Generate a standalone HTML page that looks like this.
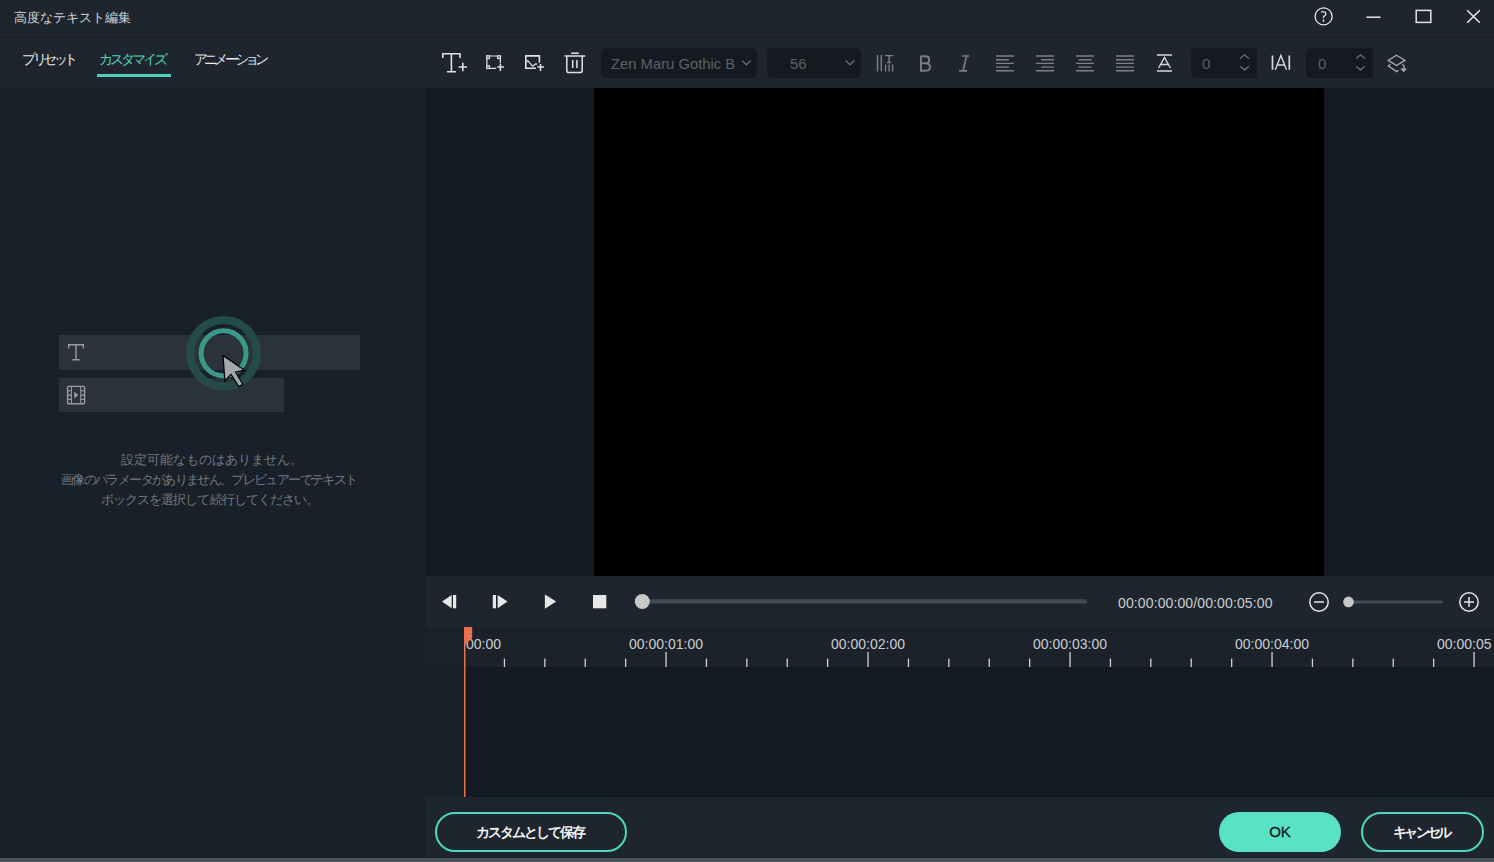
<!DOCTYPE html>
<html><head><meta charset="utf-8">
<style>
*{margin:0;padding:0;box-sizing:border-box}
html,body{width:1494px;height:862px;overflow:hidden;background:#1f252d;font-family:"Liberation Sans",sans-serif;color:#d6d6d6}
.abs{position:absolute}
svg{position:absolute;overflow:visible}
#title{left:0;top:0;width:1494px;height:37px;background:#1f252d}
#titletxt{left:14px;top:10px;font-size:13px;line-height:16px;color:#d2d4d6;white-space:nowrap}
#sep{left:0;top:37px;width:1494px;height:1px;background:#171c22}
#tool{left:0;top:38px;width:1494px;height:50px;background:#1f252e}
#left{left:0;top:88px;width:426px;height:770px;background:#19202a}
#prev{left:426px;top:88px;width:1068px;height:488px;background:#141a21}
#black{left:594px;top:88px;width:730px;height:488px;background:#000}
#ctrl{left:426px;top:576px;width:1068px;height:51px;background:#1f252e}
#ruler{left:426px;top:627px;width:1068px;height:40px;background:#1c222a}
#track{left:426px;top:667px;width:1068px;height:130px;background:#141a21}
#trackl{left:426px;top:667px;width:39px;height:130px;background:#19202a}
#bottom{left:426px;top:797px;width:1068px;height:61px;background:#1f252e}
#bline{left:0;top:858px;width:1494px;height:4px;background:#4b5259}
.tab{top:52px;font-size:13.5px;line-height:16px;color:#e8e8e8;white-space:nowrap}
.msg{font-size:13px;line-height:16px;color:#74797f;white-space:nowrap}
.dd{background:#151a21;border-radius:5px}
.rl{top:636px;font-size:14px;line-height:16px;color:#c9ced3;white-space:nowrap;width:100px;text-align:center}
.btn{border-radius:21px;font-weight:bold;font-size:14px;line-height:16px;text-align:center;white-space:nowrap}
</style></head><body>
<div id="title" class="abs"></div>
<div id="titletxt" class="abs">高度なテキスト編集</div>
<div id="sep" class="abs"></div>
<div id="tool" class="abs"></div>
<div id="left" class="abs"></div>
<div id="prev" class="abs"></div>
<div id="black" class="abs"></div>
<div id="ctrl" class="abs"></div>
<div id="ruler" class="abs"></div>
<div id="track" class="abs"></div>
<div id="trackl" class="abs"></div>
<div id="bottom" class="abs"></div>
<div id="bline" class="abs"></div>

<!-- title bar buttons -->
<svg style="left:0;top:0" width="1494" height="37">
  <g fill="none" stroke="#e6e6e6" stroke-width="1.3">
    <circle cx="1323.6" cy="16.4" r="8.5"/>
    <path d="M1321 11.9 H1324.1 Q1325.8 11.9 1325.8 13.7 Q1325.8 15 1324.4 15.9 Q1323.5 16.5 1323.5 17.4 V18"/>
    <line x1="1366.5" y1="17.2" x2="1380.5" y2="17.2" stroke-width="1.5"/>
    <rect x="1416.2" y="10.4" width="14.6" height="12" stroke-width="1.5"/>
    <path d="M1467.2 10.2 L1479.8 22.8 M1479.8 10.2 L1467.2 22.8" stroke-width="1.5"/>
  </g>
  <rect x="1322.8" y="19.4" width="1.4" height="2.4" fill="#e6e6e6"/>
</svg>

<!-- tabs -->
<div class="abs tab" style="left:22px;letter-spacing:-3.45px">プリセット</div>
<div class="abs tab" style="left:99px;color:#4dd8bc;letter-spacing:-3px">カスタマイズ</div>
<div class="abs" style="left:97px;top:74px;width:74px;height:3px;background:#4fd3b8"></div>
<div class="abs tab" style="left:194px;letter-spacing:-3.77px">アニメーション</div>

<!-- toolbar icons -->
<svg style="left:0;top:0" width="1494" height="88">
  <g fill="none" stroke="#e2e2e2" stroke-width="1.6">
    <!-- T+ -->
    <path d="M442.8 58 V53.8 H460 V58 M451.4 53.8 V71.8 M447 71.8 H456"/>
    <path d="M458.6 67 H467 M462.8 62.8 V71.2"/>
    <!-- rect+ -->
    <path d="M489.8 56 H497.1 M486.9 58.9 V65.2 M489.8 68.3 H496.2 M500.3 58.9 V63.5" stroke-width="1.2"/>
    <rect x="486.7" y="55.8" width="2.7" height="2.7" stroke-width="1.3"/>
    <rect x="497.7" y="55.8" width="2.7" height="2.7" stroke-width="1.3"/>
    <rect x="486.7" y="65.8" width="2.7" height="2.7" stroke-width="1.3"/>
    <path d="M497.3 67.1 H503.9 M500.4 64 V70.9" stroke-width="1.5"/>
    <!-- image+ -->
    <path d="M536 68.2 H525.8 V55.9 H539.4 V62.8" stroke-width="1.6"/>
    <path d="M526 62.4 L527.8 60.6 L532.5 66.2 L535.5 63.9 L537.2 64.2" stroke-width="1.2"/>
    <path d="M537.4 67.1 H544 M540.5 64 V70.9" stroke-width="1.5"/>
    <!-- trash -->
    <path d="M564.6 56 H585.2 M571.2 53.2 H578.8" stroke-width="1.5"/>
    <path d="M566.8 56 V70.5 Q566.8 72.6 569 72.6 H580 Q582.2 72.6 582.2 70.5 V56" stroke-width="1.5"/>
    <path d="M572.7 60 V68 M576.9 60 V68" stroke-width="1.5"/>
  </g>
</svg>

<!-- dropdowns -->
<div class="abs dd" style="left:601px;top:48px;width:156px;height:30px"></div>
<div class="abs" style="left:611px;top:56px;font-size:14.8px;line-height:16px;color:#5b6168;white-space:nowrap">Zen Maru Gothic B</div>
<div class="abs dd" style="left:767px;top:48px;width:94px;height:30px"></div>
<div class="abs" style="left:790px;top:56px;font-size:15px;line-height:16px;color:#5b6168">56</div>
<svg style="left:0;top:0" width="1494" height="88">
  <g fill="none" stroke="#6a7077" stroke-width="1.3">
    <path d="M742.3 60.6 L746.4 64.8 L750.5 60.6"/>
    <path d="M845.5 60.6 L850 64.8 L854.5 60.6"/>
  </g>
  <!-- line spacing icon -->
  <g fill="none" stroke="#7c8187" stroke-width="1.4">
    <path d="M877.5 55 V71.6 M881.3 55 V71.6"/>
    <path d="M885 55.6 H893.2 M889.1 55.6 V62.5 M887 62.5 H891.2"/>
    <path d="M885.6 64.6 V71.6 M889.1 64.6 V71.6 M892.6 64.6 V71.6"/>
  </g>
  <!-- B I -->
  <path d="M920.9 56.3 H925.3 Q929.2 56.3 929.2 59.8 Q929.2 63.3 925.3 63.3 H920.9 M920.9 63.3 H925.8 Q930 63.3 930 67.1 Q930 70.8 925.8 70.8 H920.9 Z M920.9 56.3 V70.8" fill="none" stroke="#7a7f85" stroke-width="1.9"/>
  <g stroke="#7a7f85" stroke-width="1.6" fill="none">
    <path d="M962 56 H969 M959 70.9 H967 M966.6 56 L963 70.9" stroke-width="1.7"/>
  </g>
  <!-- align icons -->
  <g stroke="#7c8187" stroke-width="1.4" fill="none">
    <path d="M996 56 H1014 M996 59.7 H1009 M996 63.4 H1014 M996 67.1 H1009 M996 70.8 H1014"/>
    <path d="M1036 56 H1054 M1041 59.7 H1054 M1036 63.4 H1054 M1041 67.1 H1054 M1036 70.8 H1054"/>
    <path d="M1076 56 H1094 M1078.5 59.7 H1091.5 M1076 63.4 H1094 M1078.5 67.1 H1091.5 M1076 70.8 H1094"/>
    <path d="M1116 56 H1134 M1116 59.7 H1134 M1116 63.4 H1134 M1116 67.1 H1134 M1116 70.8 H1134"/>
  </g>
  <!-- A overline underline -->
  <g stroke="#d8d8d8" stroke-width="1.4" fill="none">
    <path d="M1157 55 H1172 M1157 71 H1172"/>
    <path d="M1158.6 68 L1164.5 57.5 L1170.4 68 M1160.7 64.5 H1168.3"/>
  </g>
</svg>

<!-- spin boxes -->
<div class="abs dd" style="left:1191px;top:48px;width:66px;height:30px;border-radius:5px 1px 1px 5px"></div>
<div class="abs" style="left:1202px;top:56px;font-size:15px;line-height:16px;color:#5b6168">0</div>
<div class="abs dd" style="left:1306px;top:48px;width:67px;height:30px;border-radius:5px 1px 1px 5px"></div>
<div class="abs" style="left:1318px;top:56px;font-size:15px;line-height:16px;color:#5b6168">0</div>
<svg style="left:0;top:0" width="1494" height="88">
  <g fill="none" stroke="#6a7077" stroke-width="1.3">
    <path d="M1240.2 58.6 L1244.5 54.8 L1248.8 58.6 M1240.2 66.3 L1244.5 70.1 L1248.8 66.3"/>
    <path d="M1356.2 58.6 L1360.5 54.8 L1364.8 58.6 M1356.2 66.3 L1360.5 70.1 L1364.8 66.3"/>
  </g>
  <!-- |A| -->
  <g stroke="#d8d8d8" stroke-width="1.4" fill="none">
    <path d="M1272.5 55.5 V69.8 M1289.3 55.5 V69.8" stroke-width="1.7"/>
    <path d="M1275.3 69.8 L1280.9 55.5 L1286.5 69.8 M1277.3 65 H1284.5"/>
  </g>
  <!-- layers -->
  <g stroke="#a9adb1" stroke-width="1.3" fill="none">
    <path d="M1396.5 55.2 L1405 60.4 L1396.5 65.6 L1388.2 60.4 Z"/>
    <path d="M1390.4 64.3 L1388.4 66 L1396.7 71.6 L1398.6 70.3"/>
    <path d="M1402.3 64.4 L1404 65.8 V69"/>
  </g>
  <path d="M1400.4 68.4 H1407 L1403.7 72.2 Z" fill="#a9adb1"/>
</svg>

<!-- left panel content -->
<div class="abs" style="left:59px;top:335px;width:301px;height:35px;background:#2b323a"></div>
<div class="abs" style="left:59px;top:378px;width:225px;height:34px;background:#2b323a"></div>
<svg style="left:0;top:0" width="426" height="420">
  <g fill="none" stroke="#9a9ea3" stroke-width="1.4">
    <path d="M68.7 348.5 V344.7 H83.3 V348.5 M76 344.7 V359.8 M72.3 359.8 H79.7"/>
    <rect x="67.6" y="386.4" width="17" height="17.4" rx="1"/>
    <path d="M71.4 386.4 V403.8 M80.8 386.4 V403.8 M67.6 390.8 H71.4 M67.6 395.1 H71.4 M67.6 399.4 H71.4 M80.8 390.8 H84.6 M80.8 395.1 H84.6 M80.8 399.4 H84.6" stroke-width="1.1"/>
  </g>
  <path d="M74.2 391.8 L78.4 395.1 L74.2 398.4 Z" fill="#9a9ea3"/>
  <!-- loading rings -->
  <circle cx="223.6" cy="353.3" r="33.3" fill="none" stroke="#244b49" stroke-width="8.2"/>
  <circle cx="223.6" cy="353.3" r="22.5" fill="none" stroke="#3a9a8a" stroke-width="5"/>
  <!-- cursor -->
  <path d="M223 355.4 L224.9 381 L231 374.2 L238.8 386.6 L242.8 384.3 L235.6 372.2 L244.6 370.2 Z" fill="#a4a8ac" stroke="#000" stroke-width="1.2" stroke-linejoin="miter"/>
</svg>
<div class="abs msg" style="left:121px;top:452px">設定可能なものはありません。</div>
<div class="abs msg" style="left:61px;top:472px;letter-spacing:-1.64px">画像のパラメータがありません。プレビュアーでテキスト</div>
<div class="abs msg" style="left:101px;top:492px;letter-spacing:-0.94px">ボックスを選択して続行してください。</div>

<!-- player controls -->
<svg style="left:0;top:0" width="1494" height="627">
  <g fill="#e8e8e8">
    <path d="M442 601.6 L451.7 595 V608.3 Z"/>
    <rect x="453" y="595" width="3.2" height="13.3"/>
    <rect x="492.8" y="595" width="3.2" height="13.3"/>
    <path d="M507.5 601.6 L497.6 595 V608.3 Z"/>
    <path d="M544.9 594.4 L556.2 601.6 L544.9 608.8 Z"/>
    <rect x="593" y="595" width="13.3" height="13.3"/>
  </g>
  <rect x="642" y="599.2" width="445" height="4.4" rx="2.2" fill="#444a51"/>
  <circle cx="642.3" cy="601.5" r="7.5" fill="#c8c8c8"/>
  <g fill="none" stroke="#e6e6e6" stroke-width="1.5">
    <circle cx="1319" cy="602" r="9.2"/>
    <path d="M1314 602 H1324"/>
    <circle cx="1469" cy="602" r="9.2"/>
    <path d="M1464 602 H1474 M1469 597 V607"/>
  </g>
  <rect x="1348" y="600.6" width="95" height="2.8" rx="1.4" fill="#454b52"/>
  <circle cx="1348.5" cy="601.9" r="5.3" fill="#c8c8c8"/>
</svg>
<div class="abs" style="left:1118px;top:595px;font-size:14px;letter-spacing:0.12px;line-height:16px;color:#c9ced3;white-space:nowrap">00:00:00:00/00:00:05:00</div>

<!-- ruler -->
<div class="abs" style="left:465px;top:627px;width:1027px;height:40px;overflow:hidden">
  <div class="abs rl" style="left:-51px;top:9px">00:00:00:00</div>
  <div class="abs rl" style="left:151px;top:9px">00:00:01:00</div>
  <div class="abs rl" style="left:353px;top:9px">00:00:02:00</div>
  <div class="abs rl" style="left:555px;top:9px">00:00:03:00</div>
  <div class="abs rl" style="left:757px;top:9px">00:00:04:00</div>
  <div class="abs rl" style="left:959px;top:9px">00:00:05:00</div>
</div>
<svg id="ticks" style="left:0;top:0" width="1494" height="800"><rect x="503.8" y="658.5" width="1.3" height="8.5" fill="#cfd2d5"/><rect x="544.2" y="658.5" width="1.3" height="8.5" fill="#cfd2d5"/><rect x="584.6" y="658.5" width="1.3" height="8.5" fill="#cfd2d5"/><rect x="625.0" y="658.5" width="1.3" height="8.5" fill="#cfd2d5"/><rect x="665.4" y="652" width="1.3" height="15" fill="#cfd2d5"/><rect x="705.8" y="658.5" width="1.3" height="8.5" fill="#cfd2d5"/><rect x="746.2" y="658.5" width="1.3" height="8.5" fill="#cfd2d5"/><rect x="786.6" y="658.5" width="1.3" height="8.5" fill="#cfd2d5"/><rect x="827.0" y="658.5" width="1.3" height="8.5" fill="#cfd2d5"/><rect x="867.4" y="652" width="1.3" height="15" fill="#cfd2d5"/><rect x="907.8" y="658.5" width="1.3" height="8.5" fill="#cfd2d5"/><rect x="948.2" y="658.5" width="1.3" height="8.5" fill="#cfd2d5"/><rect x="988.6" y="658.5" width="1.3" height="8.5" fill="#cfd2d5"/><rect x="1029.0" y="658.5" width="1.3" height="8.5" fill="#cfd2d5"/><rect x="1069.4" y="652" width="1.3" height="15" fill="#cfd2d5"/><rect x="1109.8" y="658.5" width="1.3" height="8.5" fill="#cfd2d5"/><rect x="1150.2" y="658.5" width="1.3" height="8.5" fill="#cfd2d5"/><rect x="1190.6" y="658.5" width="1.3" height="8.5" fill="#cfd2d5"/><rect x="1231.0" y="658.5" width="1.3" height="8.5" fill="#cfd2d5"/><rect x="1271.4" y="652" width="1.3" height="15" fill="#cfd2d5"/><rect x="1311.8" y="658.5" width="1.3" height="8.5" fill="#cfd2d5"/><rect x="1352.2" y="658.5" width="1.3" height="8.5" fill="#cfd2d5"/><rect x="1392.6" y="658.5" width="1.3" height="8.5" fill="#cfd2d5"/><rect x="1433.0" y="658.5" width="1.3" height="8.5" fill="#cfd2d5"/><rect x="1473.4" y="652" width="1.3" height="15" fill="#cfd2d5"/></svg>
<!-- playhead -->
<svg style="left:0;top:0" width="1494" height="800">
  <rect x="464" y="627" width="1.5" height="170" fill="#ec6e4e"/>
  <path d="M464 627 H472.2 V637.8 L465.5 644.5 H464 Z" fill="#ec6e4e"/>
</svg>

<!-- bottom buttons -->
<div class="abs btn" style="left:435px;top:812px;width:192px;height:40px;border:2.5px solid #4fd7bb;color:#f2f2f2;padding-top:10px;letter-spacing:-2px;text-indent:-2px">カスタムとして保存</div>
<div class="abs btn" style="left:1219px;top:812px;width:122px;height:40px;background:#5ae2c5;color:#10161c;padding-top:12px;font-size:15px;font-weight:normal;-webkit-text-stroke:0.3px #10161c">OK</div>
<div class="abs btn" style="left:1361px;top:812px;width:123px;height:40px;border:2.5px solid #4fd7bb;color:#f2f2f2;padding-top:10px;letter-spacing:-2.75px;text-indent:-2.75px">キャンセル</div>

</body></html>
